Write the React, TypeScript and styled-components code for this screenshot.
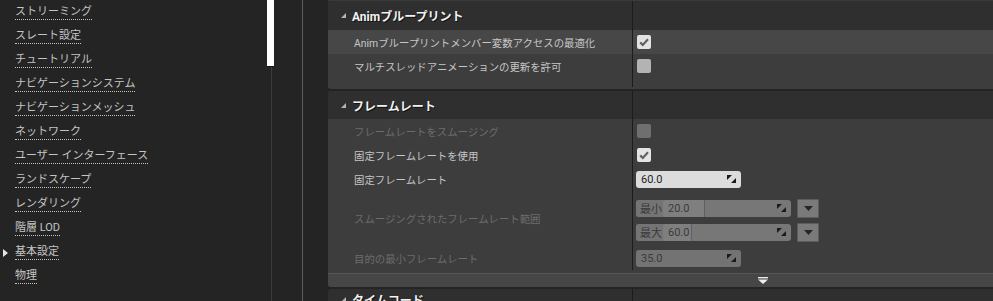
import styled, { createGlobalStyle } from "styled-components";

const colors = {
  page: "#242424",
  header: "#2f2f2f",
  row: "#3d3d3d",
  rowHover: "#474747",
  divider: "#1c1c1c",
  label: "#c6c6c6",
  labelDisabled: "#6c6c6c",
  navText: "#c4c4c4",
};

const GlobalStyle = createGlobalStyle`
  html, body {
    margin: 0;
    padding: 0;
  }
  body {
    background: ${colors.page};
    font-family: Roboto, "Noto Sans CJK JP", sans-serif;
    overflow: hidden;
  }
`;

const Layout = styled.div`
  display: flex;
  width: 993px;
  height: 301px;
  overflow: hidden;
  background: ${colors.page};
`;

/* ---------- left category list ---------- */

const Sidebar = styled.nav`
  width: 267px;
  flex-shrink: 0;
`;

const NavList = styled.ul`
  list-style: none;
  margin: 0;
  padding: 0;
`;

const NavItem = styled.li`
  display: flex;
  align-items: flex-start;
  height: 24px;
  padding-top: 6px;
  box-sizing: border-box;
`;

const Marker = styled.span<{ $visible: boolean }>`
  width: 15px;
  flex-shrink: 0;
  display: flex;

  &::before {
    content: "";
    display: ${p => (p.$visible ? "block" : "none")};
    margin: 3px 0 0 3px;
    border-left: 5px solid #e4e4e4;
    border-top: 4px solid transparent;
    border-bottom: 4px solid transparent;
  }
`;

const NavLink = styled.span`
  display: inline-block;
  font-size: 11px;
  line-height: 12px;
  padding-bottom: 1px;
  color: ${colors.navText};
  border-bottom: 1px dotted ${colors.navText};
  white-space: nowrap;
`;

const ScrollBar = styled.div`
  width: 7px;
  flex-shrink: 0;
  display: flex;
  flex-direction: column;
`;

const ScrollThumb = styled.div`
  height: 66px;
  background: #ffffff;
  border-bottom: 1px solid #151515;
`;

const ScrollTrack = styled.div`
  flex: 1;
  background: linear-gradient(to right, transparent 4px, #3b3b3b 4px, #3b3b3b 5px, transparent 5px);
`;

const Splitter = styled.div`
  width: 54px;
  flex-shrink: 0;
  background: linear-gradient(to right, transparent 28px, #5e5e5e 28px, #5e5e5e 29px, transparent 29px);
`;

/* ---------- details panel ---------- */

const Details = styled.div`
  width: 870px;
  flex-shrink: 0;
  display: flex;
  flex-direction: column;
  gap: 2px;
  border-top: 1px solid #3a3a3a;
`;

const Category = styled.section<{ $padBottom?: number }>`
  border-radius: 3px;
  overflow: hidden;
  background: ${colors.row};
  padding-bottom: ${p => p.$padBottom ?? 0}px;
  flex-shrink: 0;
`;

const HeaderRow = styled.div<{ $height: number }>`
  display: grid;
  grid-template-columns: 304px 1fr;
  height: ${p => p.$height}px;
  background: ${colors.header};
`;

const HeaderTitle = styled.div`
  display: flex;
  align-items: center;
  gap: 6px;
  padding-left: 13px;
  font-size: 12px;
  font-weight: bold;
  color: #f2f2f2;
  text-shadow: 1px 1px 0 #111;
  white-space: nowrap;
`;

const Row = styled.div<{ $height?: number; $highlight?: boolean }>`
  display: grid;
  grid-template-columns: 304px 1fr;
  height: ${p => p.$height ?? 24}px;
  background: ${p => (p.$highlight ? colors.rowHover : colors.row)};
`;

const NameCell = styled.div<{ $disabled?: boolean }>`
  display: flex;
  align-items: center;
  padding-left: 26px;
  font-size: 10.4px;
  color: ${p => (p.$disabled ? colors.labelDisabled : colors.label)};
  white-space: nowrap;
`;

const ValueCell = styled.div<{ $padTop?: number; $noDivider?: boolean }>`
  display: flex;
  flex-direction: column;
  justify-content: ${p => (p.$padTop ? "flex-start" : "center")};
  padding-left: 3px;
  padding-top: ${p => p.$padTop ?? 0}px;
  border-left: 1px solid ${p => (p.$noDivider ? "transparent" : colors.divider)};
`;

const SubRow = styled.div`
  display: flex;
  align-items: center;
  gap: 6px;
  height: 24px;
`;

type CheckState = "checked" | "unchecked" | "disabled";

const CheckBox = styled.span<{ $state: CheckState }>`
  width: 14px;
  height: 14px;
  margin-left: 1px;
  border-radius: 2px;
  display: flex;
  align-items: center;
  justify-content: center;
  background: ${p =>
    p.$state === "checked" ? "#e4e4e4" : p.$state === "unchecked" ? "#b3b3b3" : "#6f6f6f"};
`;

const NumberField = styled.div<{ $disabled?: boolean }>`
  width: 105px;
  height: 17px;
  box-sizing: border-box;
  border-radius: 3px;
  display: flex;
  align-items: center;
  justify-content: space-between;
  padding: 0 5px 0 5px;
  font-size: 11px;
  background: ${p => (p.$disabled ? "#737373" : "#dcdcdc")};
  color: ${p => (p.$disabled ? "#3a3a3a" : "#1c1c1c")};
`;

const RangeField = styled.div`
  width: 155px;
  height: 17px;
  border-radius: 3px;
  display: flex;
  align-items: stretch;
  background: #777777;
  font-size: 11px;
  color: #3a3a3a;
  overflow: hidden;
`;

const RangeLabel = styled.span`
  width: 27px;
  flex-shrink: 0;
  display: flex;
  align-items: center;
  padding-left: 4px;
  box-sizing: border-box;
  background: #747474;
`;

const RangeFill = styled.span<{ $width: number }>`
  width: ${p => p.$width}px;
  flex-shrink: 0;
  display: flex;
  align-items: center;
  padding-left: 5px;
  box-sizing: border-box;
  background: #7f7f7f;
  border-radius: 3px 0 0 3px;
  border-right: 1px solid #5f5f5f;
`;

const RangeRest = styled.span`
  flex: 1;
  display: flex;
  align-items: center;
  justify-content: flex-end;
  padding-right: 5px;
`;

const DropButton = styled.button`
  width: 22px;
  height: 19px;
  padding: 0;
  margin: 0;
  border: 1px solid #5c5c5c;
  border-radius: 1px;
  background: #7a7a7a;
  display: flex;
  align-items: center;
  justify-content: center;
`;

const ExpandBar = styled.div`
  height: 14px;
  box-sizing: border-box;
  border-top: 1px solid #555555;
  background: #464646;
  display: flex;
  align-items: center;
  justify-content: center;
`;

/* ---------- drawings ---------- */

const Disclosure = () => (
  <svg width="5" height="5" viewBox="0 0 5 5">
    <polygon points="5,0 5,5 0,5" fill="#b4b4b4" />
  </svg>
);

const CheckMark = () => (
  <svg width="12" height="12" viewBox="0 0 12 12">
    <polyline points="2.2,6.4 4.8,9 10,3.2" fill="none" stroke="#626262" strokeWidth="2.2" />
  </svg>
);

const SpinIcon = () => (
  <svg width="9" height="8" viewBox="0 0 9 8">
    <polygon points="0,0 5,0 0,5" fill="#1a1a1a" />
    <polygon points="9,3 9,8 4,8" fill="#1a1a1a" />
  </svg>
);

const DropArrow = () => (
  <svg width="9" height="5" viewBox="0 0 9 5">
    <polygon points="0,0 9,0 4.5,5" fill="#262626" />
  </svg>
);

const ExpandIcon = () => (
  <svg width="10" height="7" viewBox="0 0 10 7">
    <rect x="0" y="0" width="10" height="1.4" fill="#ececec" />
    <polygon points="0,2.6 10,2.6 5,7" fill="#ececec" />
  </svg>
);

const navItems = [
  "ストリーミング",
  "スレート設定",
  "チュートリアル",
  "ナビゲーションシステム",
  "ナビゲーションメッシュ",
  "ネットワーク",
  "ユーザー インターフェース",
  "ランドスケープ",
  "レンダリング",
  "階層 LOD",
  "基本設定",
  "物理",
];

function Check({ state }: { state: CheckState }) {
  return <CheckBox $state={state}>{state === "checked" && <CheckMark />}</CheckBox>;
}

function Header({ title, height }: { title: string; height: number }) {
  return (
    <HeaderRow $height={height}>
      <HeaderTitle>
        <Disclosure />
        {title}
      </HeaderTitle>
      <ValueCell />
    </HeaderRow>
  );
}

export default function App() {
  return (
    <>
      <GlobalStyle />
      <Layout>
        <Sidebar>
          <NavList>
            {navItems.map((name, index) => (
              <NavItem key={index}>
                <Marker $visible={name === "基本設定"} />
                <NavLink>{name}</NavLink>
              </NavItem>
            ))}
          </NavList>
        </Sidebar>
        <ScrollBar>
          <ScrollThumb />
          <ScrollTrack />
        </ScrollBar>
        <Splitter />

        <Details>
          <Category $padBottom={2}>
            <Header title="Animブループリント" height={29} />
            <Row $highlight>
              <NameCell>Animブループリントメンバー変数アクセスの最適化</NameCell>
              <ValueCell>
                <Check state="checked" />
              </ValueCell>
            </Row>
            <Row>
              <NameCell>マルチスレッドアニメーションの更新を許可</NameCell>
              <ValueCell>
                <Check state="unchecked" />
              </ValueCell>
            </Row>
            <Row $height={9}>
              <NameCell />
              <ValueCell />
            </Row>
          </Category>

          <Category>
            <Header title="フレームレート" height={28} />
            <Row>
              <NameCell $disabled>フレームレートをスムージング</NameCell>
              <ValueCell>
                <Check state="disabled" />
              </ValueCell>
            </Row>
            <Row>
              <NameCell>固定フレームレートを使用</NameCell>
              <ValueCell>
                <Check state="checked" />
              </ValueCell>
            </Row>
            <Row>
              <NameCell>固定フレームレート</NameCell>
              <ValueCell>
                <NumberField>
                  60.0
                  <SpinIcon />
                </NumberField>
              </ValueCell>
            </Row>
            <Row $height={55}>
              <NameCell $disabled>スムージングされたフレームレート範囲</NameCell>
              <ValueCell $padTop={5}>
                <SubRow>
                  <RangeField>
                    <RangeLabel>最小</RangeLabel>
                    <RangeFill $width={42}>20.0</RangeFill>
                    <RangeRest>
                      <SpinIcon />
                    </RangeRest>
                  </RangeField>
                  <DropButton>
                    <DropArrow />
                  </DropButton>
                </SubRow>
                <SubRow>
                  <RangeField>
                    <RangeLabel>最大</RangeLabel>
                    <RangeFill $width={29}>60.0</RangeFill>
                    <RangeRest>
                      <SpinIcon />
                    </RangeRest>
                  </RangeField>
                  <DropButton>
                    <DropArrow />
                  </DropButton>
                </SubRow>
              </ValueCell>
            </Row>
            <Row>
              <NameCell $disabled>目的の最小フレームレート</NameCell>
              <ValueCell>
                <NumberField $disabled>
                  35.0
                  <SpinIcon />
                </NumberField>
              </ValueCell>
            </Row>
            <Row $height={3}>
              <NameCell />
              <ValueCell $noDivider />
            </Row>
            <ExpandBar>
              <ExpandIcon />
            </ExpandBar>
          </Category>

          <Category>
            <Header title="タイムコード" height={20} />
          </Category>
        </Details>
      </Layout>
    </>
  );
}
